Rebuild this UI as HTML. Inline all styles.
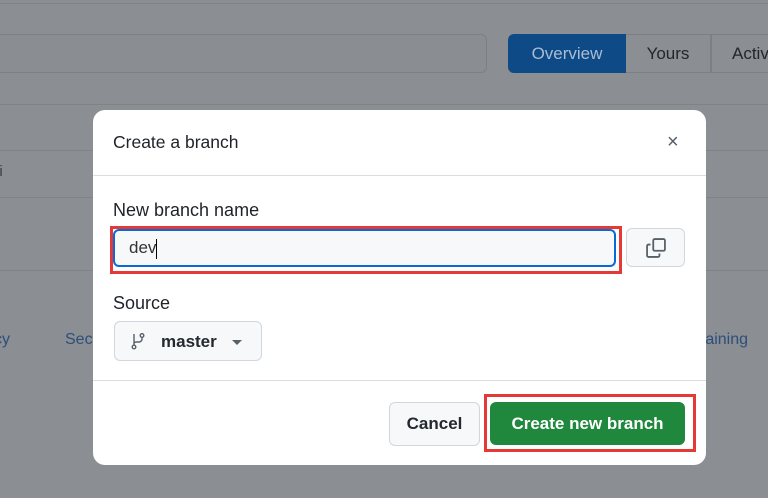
<!DOCTYPE html>
<html><head><meta charset="utf-8"><style>
*{box-sizing:border-box;margin:0;padding:0}
body{width:768px;height:498px;overflow:hidden;background:#8b8e92;font-family:"Liberation Sans",sans-serif;position:relative;color:#1f2328}
.a{position:absolute}
.hl{position:absolute;left:0;width:768px;height:1px;background:#7f8388}
</style></head><body>
<div class="hl" style="top:3px"></div>
<div class="a" style="left:-10px;top:34px;width:497px;height:39px;border:1px solid #7c8086;border-radius:6px;background:#8a8d91"></div>
<div class="a" style="left:508px;top:34px;width:118px;height:39px;background:#0e4a86;border-radius:6px 0 0 6px;color:#a9bdd4;font-size:17px;line-height:39px;text-align:center">Overview</div>
<div class="a" style="left:626px;top:34px;width:85px;height:39px;border:1px solid #7c8086;border-left:none;color:#23272c;font-size:17px;line-height:37px;text-align:center">Yours</div>
<div class="a" style="left:711px;top:34px;width:70px;height:39px;border:1px solid #7c8086;color:#23272c;font-size:17px;line-height:37px;padding-left:20px">Activ</div>
<div class="hl" style="top:104px"></div>
<div class="hl" style="top:150px"></div>
<div class="hl" style="top:197px"></div>
<div class="hl" style="top:270px"></div>
<div class="a" style="left:-4px;top:163px;font-size:15px;color:#3b3f44">li</div>
<div class="a" style="left:-6px;top:331px;font-size:16px;color:#2c4f7a">cy</div>
<div class="a" style="left:65px;top:331px;font-size:16px;color:#2c4f7a">Secu</div>
<div class="a" style="left:700px;top:331px;font-size:16px;color:#2c4f7a">raining</div>

<div class="a" style="left:93px;top:110px;width:613px;height:355px;background:#fff;border-radius:12px;overflow:hidden">
  <div class="a" style="left:20px;top:22px;font-size:17.5px;color:#1f2328">Create a branch</div>
  <div class="a" style="left:574px;top:21px;font-size:20px;color:#57606a">×</div>
  <div class="a" style="left:0;top:65px;width:613px;height:1px;background:#d8dee4"></div>
  <div class="a" style="left:20px;top:90px;font-size:18px">New branch name</div>
  <div class="a" style="left:20px;top:119px;width:503px;height:38px;border:2px solid #0969da;border-radius:6px;background:#f6f8fa;font-size:17px;line-height:34px;padding-left:14px;color:#333">dev<span style="display:inline-block;width:1px;height:20px;background:#000;vertical-align:middle"></span></div>
  <div class="a" style="left:533px;top:118px;width:59px;height:39px;border:1px solid #d0d7de;border-radius:6px;background:#f6f8fa">
    <svg width="22" height="22" viewBox="0 0 16 16" style="position:absolute;left:18px;top:8px" fill="none" stroke="#57606a" stroke-width="1.3"><rect x="6" y="1.5" width="8.5" height="8.5" rx="1"/><path d="M4 5.5H2.5a1 1 0 0 0-1 1v7a1 1 0 0 0 1 1h7a1 1 0 0 0 1-1V12"/></svg>
  </div>
  <div class="a" style="left:20px;top:183px;font-size:18px">Source</div>
  <div class="a" style="left:21px;top:211px;width:148px;height:40px;border:1px solid #d0d7de;border-radius:6px;background:#f6f8fa">
    <svg width="16" height="18" viewBox="0 0 16 18" style="position:absolute;left:15px;top:10px" fill="none" stroke="#57606a" stroke-width="1.4"><circle cx="4" cy="15" r="1.8"/><circle cx="12" cy="3.5" r="1.8"/><path d="M4 2v11M12 5.5v1.5a3 3 0 0 1-3 3H6a2 2 0 0 0-2 2"/></svg>
    <span style="position:absolute;left:46px;top:10px;font-size:17px;font-weight:bold;color:#24292f">master</span>
    <span style="position:absolute;left:117px;top:18px;border-left:5px solid transparent;border-right:5px solid transparent;border-top:5px solid #57606a"></span>
  </div>
  <div class="a" style="left:0;top:270px;width:613px;height:1px;background:#d8dee4"></div>
  <div class="a" style="left:296px;top:292px;width:91px;height:44px;border:1px solid #d0d7de;border-radius:6px;background:#f6f8fa;font-size:17px;font-weight:bold;line-height:42px;text-align:center;color:#24292f">Cancel</div>
  <div class="a" style="left:397px;top:292px;width:195px;height:43px;border-radius:6px;background:#1f883d;font-size:17px;font-weight:bold;line-height:43px;text-align:center;color:#fff">Create new branch</div>
</div>
<div class="a" style="left:110px;top:226px;width:512px;height:48px;border:3px solid #e53935"></div>
<div class="a" style="left:484px;top:394px;width:212px;height:58px;border:3px solid #e53935"></div>
</body></html>
